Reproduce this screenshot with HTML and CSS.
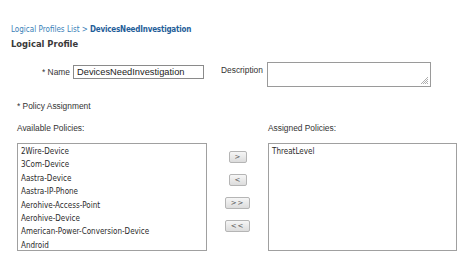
FILE: index.html
```html
<!DOCTYPE html>
<html>
<head>
<meta charset="utf-8">
<link rel="stylesheet" href="styles.css">
</head>
<body>
<div class="page">
  <div class="crumb"><span class="crumb-link">Logical Profiles List</span> &gt; <span class="crumb-current">DevicesNeedInvestigation</span></div>
  <div class="title">Logical Profile</div>
  <div class="name-row">
    <span class="label name-label">* Name</span>
    <div class="input">DevicesNeedInvestigation</div>
    <span class="label desc-label">Description</span>
    <div class="textarea"><svg class="grip" width="9" height="9" viewBox="0 0 9 9"><path d="M8 1L1 8M8 3L3 8M8 5L5 8M8 7L7 8" stroke="#999" stroke-width="0.8"/></svg></div>
  </div>
  <div class="label policy-label">* Policy Assignment</div>
  <div class="lists">
    <div class="col-left">
      <div class="label list-label">Available Policies:</div>
      <div class="listbox left-box">
        <div class="item">2Wire-Device</div>
        <div class="item">3Com-Device</div>
        <div class="item">Aastra-Device</div>
        <div class="item">Aastra-IP-Phone</div>
        <div class="item">Aerohive-Access-Point</div>
        <div class="item">Aerohive-Device</div>
        <div class="item">American-Power-Conversion-Device</div>
        <div class="item">Android</div>
      </div>
    </div>
    <div class="buttons">
      <div class="btn small">&gt;</div>
      <div class="btn small">&lt;</div>
      <div class="btn wide">&gt;&gt;</div>
      <div class="btn wide">&lt;&lt;</div>
    </div>
    <div class="col-right">
      <div class="label list-label">Assigned Policies:</div>
      <div class="listbox right-box">
        <div class="item">ThreatLevel</div>
      </div>
    </div>
  </div>
</div>
</body>
</html>
```

FILE: styles.css
```css
html, body {
  margin: 0;
  padding: 0;
  background: #ffffff;
}
.page {
  width: 474px;
  height: 264px;
  overflow: hidden;
  padding-top: 1px;
  box-sizing: border-box;
  font-family: "Liberation Sans", Arial, sans-serif;
  color: #333;
}
.crumb {
  margin: 24px 0 0 11px;
  font-family: "DejaVu Sans Condensed", "DejaVu Sans", sans-serif;
  font-size: 8px;
  line-height: 10px;
  color: #3a7fb8;
  white-space: nowrap;
}
.crumb-current {
  font-weight: bold;
  color: #1f5e99;
  letter-spacing: -0.2px;
}
.title {
  margin: 3px 0 0 11px;
  font-family: "DejaVu Sans", Verdana, sans-serif;
  font-weight: bold;
  font-size: 8.4px;
  line-height: 12px;
  color: #3a3a3a;
}
.label {
  font-size: 8.4px;
  color: #333;
  white-space: nowrap;
}
.name-row {
  display: flex;
  align-items: flex-start;
  margin-top: 15px;
  margin-left: 42px;
}
.name-label {
  margin-top: 2px;
  width: 31px;
}
.input {
  box-sizing: border-box;
  width: 131px;
  height: 14px;
  border: 1px solid #8a8a8a;
  padding: 0 3px;
  font-size: 9.3px;
  line-height: 12px;
  color: #222;
  white-space: nowrap;
}
.desc-label {
  margin-left: 17px;
  margin-top: 0;
  width: 46px;
}
.textarea {
  box-sizing: border-box;
  width: 164px;
  height: 25px;
  margin-top: -3px;
  border: 1px solid #9a9a9a;
  display: flex;
  justify-content: flex-end;
  align-items: flex-end;
}
.grip {
  display: block;
  margin: 0 1px 1px 0;
}
.policy-label {
  margin: 13px 0 0 17px;
  line-height: 12px;
}
.lists {
  display: flex;
  margin: 10px 0 0 17px;
  align-items: flex-start;
}
.list-label {
  line-height: 12px;
  height: 21px;
}
.listbox {
  box-sizing: border-box;
  height: 108px;
  border: 1px solid #a0a0a0;
  padding: 1px 3px;
  font-family: "DejaVu Sans Condensed", "DejaVu Sans", sans-serif;
  font-size: 8px;
  color: #2a2a2a;
  white-space: nowrap;
}
.left-box {
  width: 190px;
}
.right-box {
  width: 189px;
}
.item {
  height: 13.4px;
  line-height: 13.4px;
}
.buttons {
  width: 61px;
  display: flex;
  flex-direction: column;
  align-items: center;
  padding-top: 29px;
  gap: 11px;
}
.btn {
  box-sizing: border-box;
  height: 12px;
  border: 1px solid #b5b5b5;
  border-radius: 2px;
  background: linear-gradient(#f6f6f6, #dcdcdc);
  font-family: "DejaVu Sans", sans-serif;
  font-size: 7px;
  line-height: 10px;
  text-align: center;
  color: #555;
}
.btn.small {
  width: 18px;
}
.btn.wide {
  width: 25px;
  letter-spacing: 1px;
}
```
